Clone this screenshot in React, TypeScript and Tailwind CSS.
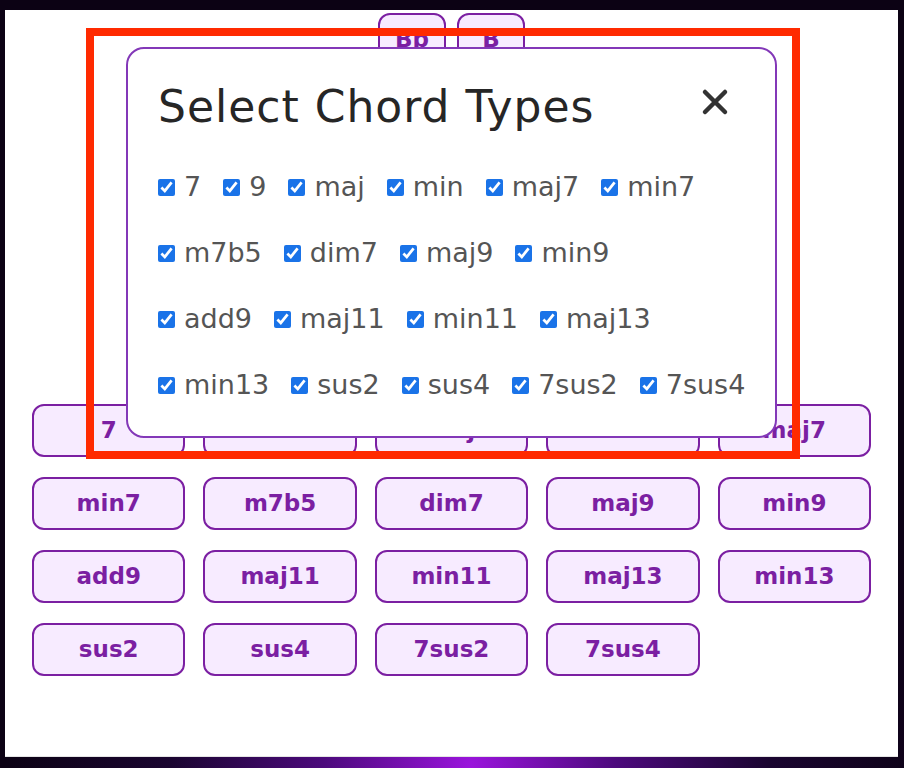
import { useState } from 'react';

const NOTES = ['Bb', 'B'];

const CHORDS = [
  '7', '9', 'maj', 'min', 'maj7',
  'min7', 'm7b5', 'dim7', 'maj9', 'min9',
  'add9', 'maj11', 'min11', 'maj13', 'min13',
  'sus2', 'sus4', '7sus2', '7sus4',
];

// rows as they wrap in the dialog
const CHECK_ROWS = [
  ['7', '9', 'maj', 'min', 'maj7', 'min7'],
  ['m7b5', 'dim7', 'maj9', 'min9'],
  ['add9', 'maj11', 'min11', 'maj13'],
  ['min13', 'sus2', 'sus4', '7sus2', '7sus4'],
];

function CloseIcon() {
  return (
    <svg width="28" height="28" viewBox="0 0 28 28" fill="none">
      <path d="M4 4 L24 24 M24 4 L4 24" stroke="#333333" strokeWidth="4.5" strokeLinecap="round" />
    </svg>
  );
}

export default function App() {
  const [selected, setSelected] = useState<string[]>(CHORDS);

  const toggle = (c: string) =>
    setSelected(s => (s.includes(c) ? s.filter(x => x !== c) : [...s, c]));

  return (
    <div className="min-h-screen w-full bg-[#12031d] bg-[radial-gradient(ellipse_at_52%_100%,#9a14dc_0%,#4c0a7c_22%,#1a0530_45%,#0c0214_70%)] pt-[10px] pl-[5px] pr-[6px] pb-[11px] font-['DejaVu_Sans',sans-serif]">
      <div className="relative h-[747px] w-[893px] overflow-hidden border-b border-[#e5e5e5] bg-white">
        {/* note row (scrolled) */}
        <div className="flex justify-center gap-[11px] pt-[3px]">
          {NOTES.map(n => (
            <button key={n} className="flex h-[53px] w-[68px] items-center justify-center rounded-[12px] border-2 border-[#7b1fa2] bg-[#f7ebff] text-[23px] font-bold text-[#7b1fa2]">
              {n}
            </button>
          ))}
        </div>

        {/* chord type buttons */}
        <div className="mt-[338px] grid grid-cols-5 gap-x-[18px] gap-y-[20px] px-[27px]">
          {CHORDS.map(c => (
            <button key={c} className="flex h-[53px] items-center justify-center rounded-[12px] border-2 border-[#7b1fa2] bg-[#f7ebff] text-[23px] font-bold text-[#7b1fa2]">
              {c}
            </button>
          ))}
        </div>

        {/* dialog */}
        <div className="absolute left-[121px] top-[37px] h-[391px] w-[651px] rounded-[18px] border-2 border-[#8338b8] bg-white pl-[30px] pr-[30px] pt-[32px]">
          <div className="flex items-center justify-between">
            <h2 className="text-[44px] leading-[52px] font-normal tracking-[1px] text-[#262626]">Select Chord Types</h2>
            <button className="mr-[16px] mt-[-10px]"><CloseIcon /></button>
          </div>
          <div className="mt-[37px] flex flex-col gap-[32px]">
            {CHECK_ROWS.map((row, i) => (
              <div key={i} className="flex h-[34px] items-center gap-[22px]">
                {row.map(c => (
                  <label key={c} className="flex items-center gap-[9px] text-[27px] leading-[34px] text-[#555555]">
                    <input
                      type="checkbox"
                      checked={selected.includes(c)}
                      onChange={() => toggle(c)}
                      className="m-0 h-[17px] w-[17px] accent-[#1a73e8]"
                    />
                    <span>{c}</span>
                  </label>
                ))}
              </div>
            ))}
          </div>
        </div>

        {/* annotation frame */}
        <div className="pointer-events-none absolute left-[81px] top-[18px] h-[431px] w-[714px] border-[8px] border-[#ff2a00]" />
      </div>
    </div>
  );
}
